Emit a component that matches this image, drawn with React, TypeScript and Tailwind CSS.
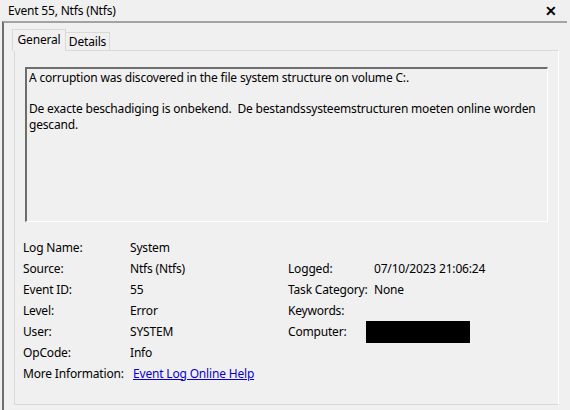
import React from "react";

export default function App() {
  const left: [string, React.ReactNode][] = [
    ["Log Name:", "System"],
    ["Source:", "Ntfs (Ntfs)"],
    ["Event ID:", "55"],
    ["Level:", "Error"],
    ["User:", "SYSTEM"],
    ["OpCode:", "Info"],
  ];
  const right: [string, React.ReactNode][] = [
    ["", ""],
    ["Logged:", "07/10/2023 21:06:24"],
    ["Task Category:", "None"],
    ["Keywords:", ""],
    ["Computer:", <span className="ml-[-8px] block w-[104px] h-[22px] bg-black" />],
    ["", ""],
  ];
  return (
    <div
      className="relative w-[570px] h-[410px] overflow-hidden bg-[#f0f0f0] text-[12px] tracking-[-0.18px] text-black"
      style={{ fontFamily: '"Noto Sans", "Open Sans", sans-serif' }}
    >
      {/* title bar */}
      <div className="flex h-[21px] items-center justify-between pl-[8px] pr-[13px]">
        <span className="text-[12px] leading-none">Event 55, Ntfs (Ntfs)</span>
        <span className="text-[14px] font-bold leading-none">✕</span>
      </div>
      <div className="ml-[2px] mr-[3px] h-[394px] border-l-2 border-t-2 border-[#a3a3a3] border-l-[#6e6e6e] pl-[8px] pr-[5px] pt-[6px]">
        {/* tabs */}
        <div className="flex h-[22px] items-end">
          <div className="relative z-10 flex h-[22px] w-[54px] items-center justify-center border border-b-0 border-[#d9d9d9] bg-[#f0f0f0] pb-[1px]">
            General
          </div>
          <div className="flex h-[19px] w-[44px] items-center justify-center border border-b-0 border-l-0 border-[#d9d9d9] bg-[#f0f0f0]">
            Details
          </div>
        </div>
        {/* panel */}
        <div className="flex">
          <div className="ml-[2px] mt-[-1px] h-[355px] w-[546px] border border-[#d9d9d9] border-r-white bg-[#f0f0f0] pl-[10px] pr-[10px] pt-[16px]">
            <div className="h-[155px] w-[523px] border-l-2 border-t-2 border-r border-b border-[#6d6d6d] border-r-white border-b-white pl-[2px] pt-[1px] leading-[15.5px]">
              <p>A corruption was discovered in the file system structure on volume C:.</p>
              <p>&nbsp;</p>
              <p>De exacte beschadiging is onbekend.&nbsp; De bestandssysteemstructuren moeten online worden gescand.</p>
            </div>
            <div className="ml-[-2px] mt-[15px] grid grid-cols-[107px_158px_86px_1fr]">
              {left.map((l, i) => (
                <React.Fragment key={i}>
                  <div className="flex h-[21px] items-center">{l[0]}</div>
                  <div className="flex h-[21px] items-center">{l[1]}</div>
                  <div className="flex h-[21px] items-center">{right[i][0]}</div>
                  <div className="flex h-[21px] items-center">{right[i][1]}</div>
                </React.Fragment>
              ))}
              <div className="flex h-[21px] items-center">More Information:</div>
              <div className="col-span-3 flex h-[21px] items-center">
                <span className="ml-[3px] text-[#0b00cc] underline">Event Log Online Help</span>
              </div>
            </div>
          </div>
          <div className="ml-[2px] mt-[-1px] h-[355px] w-[1px] bg-[#e2e2e2]" />
          <div className="ml-[3px] mt-[-1px] h-[355px] w-[1px] bg-[#fafafa]" />
        </div>
      </div>
    </div>
  );
}
